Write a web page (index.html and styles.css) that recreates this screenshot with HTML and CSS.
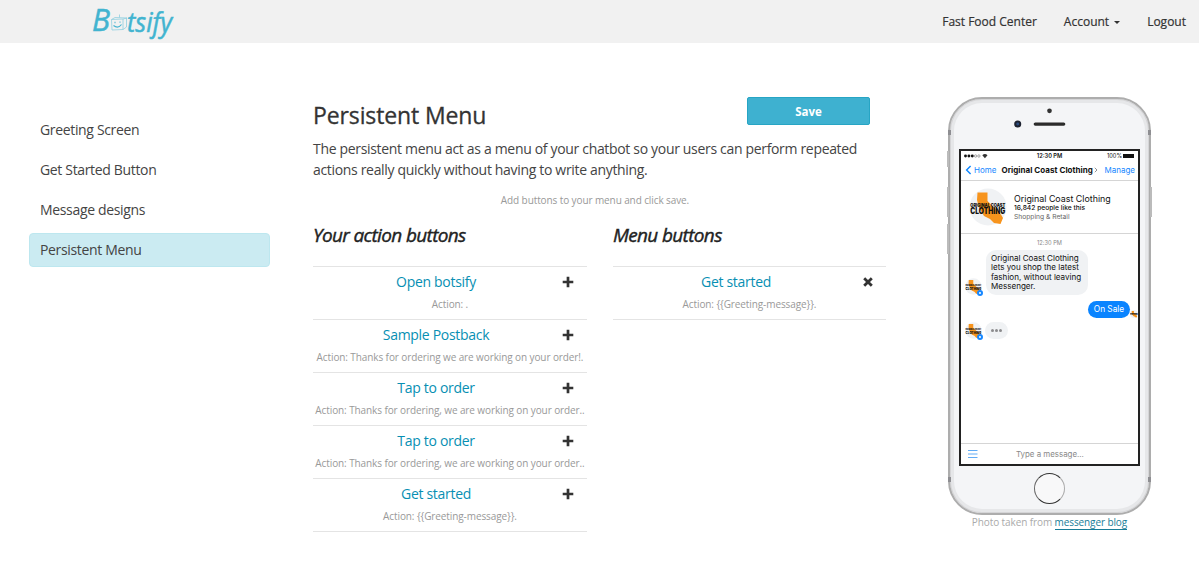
FILE: index.html
```html
<!DOCTYPE html>
<html lang="en">
<head>
<meta charset="utf-8">
<title>Botsify - Persistent Menu</title>
<link rel="stylesheet" href="styles.css">
</head>
<body>
<svg class="defs" width="0" height="0">
  <symbol id="plus" viewBox="0 0 12 12"><path d="M6 .7V11.3M.7 6H11.3" stroke="#333" stroke-width="2.7" fill="none"/></symbol>
  <symbol id="cross" viewBox="0 0 12 12"><path d="M2.2 2.2L9.8 9.8M9.8 2.2L2.2 9.8" stroke="#333" stroke-width="2.8" fill="none"/></symbol>
  <symbol id="brand" viewBox="0 0 38 38">
    <circle cx="19" cy="19" r="18.5" fill="#f0f2f4"/>
    <path d="M8.500 4.500H18.500V13L32 26.500 34 30 31.500 36 25 35 21 31 15 28 10 20 8 12Z" fill="#f7941d"/>
    <text x="1.300" y="18.700" font-size="5" textLength="35" lengthAdjust="spacingAndGlyphs">ORIGINAL COAST</text>
    <text x="1.300" y="25.800" font-size="8.400" textLength="35" lengthAdjust="spacingAndGlyphs">CLOTHING</text>
  </symbol>
</svg>
<header class="topbar">
  <svg class="logo" width="84" height="40" viewBox="0 0 84 40" aria-label="Botsify">
    <g class="logo-type">
      <text x="0" y="29" font-size="31" textLength="18" lengthAdjust="spacingAndGlyphs">B</text>
      <text x="35" y="29.500" font-size="28" textLength="45" lengthAdjust="spacingAndGlyphs">tsify</text>
    </g>
    <g fill="none" stroke="#8fcfe0" stroke-width=".8">
      <path d="M19.500 17.500L31 17V27.500L20 28ZM19.500 17.500L23 15.500 35 16 31 17M31 27.500L34.500 25V16M27.500 15.500V12.500"/>
      <path d="M21.500 23.500Q26 27 29.500 22.500" stroke="#45b4d1" stroke-width="1.200"/>
      <path d="M22.500 20.500h1M27.500 20.200h1" stroke="#45b4d1" stroke-width="1.300"/>
    </g>
  </svg>
  <nav class="topnav">
    <a>Fast Food Center</a>
    <a>Account<i class="caret"></i></a>
    <a>Logout</a>
  </nav>
</header>
<div class="page">
  <ul class="side">
    <li>Greeting Screen</li>
    <li>Get Started Button</li>
    <li>Message designs</li>
    <li class="active">Persistent Menu</li>
  </ul>
  <main class="main">
    <div class="heading"><h1>Persistent Menu</h1><button class="save">Save</button></div>
    <p class="lead">The persistent menu act as a menu of your chatbot so your users can perform repeated<br>actions really quickly without having to write anything.</p>
    <p class="hint">Add buttons to your menu and click save.</p>
    <div class="columns">
      <section>
        <h2>Your action buttons</h2>
        <ul class="rows">
          <li><b>Open botsify</b><svg><use href="#plus"/></svg><small>Action: .</small></li>
          <li><b>Sample Postback</b><svg><use href="#plus"/></svg><small>Action: Thanks for ordering we are working on your order!.</small></li>
          <li><b>Tap to order</b><svg><use href="#plus"/></svg><small>Action: Thanks for ordering, we are working on your order..</small></li>
          <li><b>Tap to order</b><svg><use href="#plus"/></svg><small>Action: Thanks for ordering, we are working on your order..</small></li>
          <li><b>Get started</b><svg><use href="#plus"/></svg><small>Action: {{Greeting-message}}.</small></li>
        </ul>
      </section>
      <section>
        <h2>Menu buttons</h2>
        <ul class="rows">
          <li><b>Get started</b><svg><use href="#cross"/></svg><small>Action: {{Greeting-message}}.</small></li>
        </ul>
      </section>
    </div>
  </main>
  <aside class="preview">
    <div class="phone">
      <i class="key k1"></i><i class="key k2"></i><i class="key k3"></i><i class="key k4"></i>
      <i class="band b1"></i><i class="band b2"></i>
      <svg class="sensors" width="181" height="46" viewBox="0 0 181 46">
        <circle cx="90.500" cy="7" r="2.400" fill="#333"/>
        <circle cx="58" cy="20.500" r="3.600" fill="#1d2230"/><circle cx="58" cy="20.500" r="1.500" fill="#2c4d80"/>
        <path d="M76 20.500H105" stroke="#2b2b2b" stroke-width="3.400" stroke-linecap="round"/>
      </svg>
      <div class="screen">
        <div class="status">
          <svg width="28" height="8" viewBox="0 0 28 8"><g fill="#111"><circle cx="4.500" cy="4" r="1.450"/><circle cx="7.900" cy="4" r="1.450"/><circle cx="11.300" cy="4" r="1.450"/></g><g fill="none" stroke="#555" stroke-width=".5"><circle cx="14.600" cy="4" r="1.200"/><circle cx="17.900" cy="4" r="1.200"/></g><path d="M21.300 3.300Q23.900 .9 26.500 3.300L23.900 6.300Z" fill="#333"/></svg>
          <span class="time">12:30 PM</span>
          <span class="batt">100%<i></i></span>
        </div>
        <div class="bar">
          <svg width="7" height="10" viewBox="0 0 7 10"><path d="M5.600 1L1.600 5 5.600 9" fill="none" stroke="#0a84ff" stroke-width="1.400"/></svg>
          <a class="home">Home</a>
          <strong>Original Coast Clothing</strong>
          <svg class="chev" width="4" height="6" viewBox="0 0 4 6"><path d="M.8 .8L3 3 .8 5.200" fill="none" stroke="#777" stroke-width=".8"/></svg>
          <a class="manage">Manage</a>
        </div>
        <div class="profile">
          <svg class="brand" width="38" height="38"><use href="#brand"/></svg>
          <div><p class="p1">Original Coast Clothing</p><p class="p2">16,842 people like this</p><p class="p3">Shopping &amp; Retail</p></div>
        </div>
        <div class="chat">
          <p class="stamp">12:30 PM</p>
          <div class="msg">
            <span class="avatar"><svg class="brand" width="17" height="17"><use href="#brand"/></svg><i></i></span>
            <p class="bubble">Original Coast Clothing<br>lets you shop the latest<br>fashion, without leaving<br>Messenger.</p>
          </div>
          <div class="reply"><p>On Sale</p><svg class="brand" width="8" height="8"><use href="#brand"/></svg></div>
          <div class="msg typing">
            <span class="avatar"><svg class="brand" width="17" height="17"><use href="#brand"/></svg><i></i></span>
            <p class="dots"><i></i><i></i><i></i></p>
          </div>
        </div>
        <div class="compose">
          <svg width="10" height="8" viewBox="0 0 10 8"><path d="M0 .5H9.500M0 4H9.500M0 7.500H9.500" stroke="#62acf5" stroke-width="1"/></svg>
          <span>Type a message...</span>
        </div>
      </div>
      <div class="button"></div>
    </div>
    <p class="credit">Photo taken from <a>messenger blog</a></p>
  </aside>
</div>
</body>
</html>
```
FILE: styles.css
```css
* { box-sizing: border-box; }
body { margin: 0; background: #fff; color: #444; font: 14px "Open Sans", sans-serif; width: 1200px; height: 588px; overflow: hidden; }
h1, h2, p, ul { margin: 0; padding: 0; }
ul { list-style: none; }
svg { display: block; flex: none; }
.defs { display: none; }
.topbar { height: 43px; width: 1199px; background: #f1f1f1; display: flex; justify-content: space-between; padding: 2px 13px 0 92px; }
.logo { overflow: visible; }
.logo-type { fill: #42b4d0; stroke: #42b4d0; stroke-width: .5px; font-family: "Open Sans", sans-serif; font-style: italic; }
.topnav { display: flex; gap: 27px; font-size: 12px; line-height: 39px; color: #333; -webkit-text-stroke: .2px #333; }
.topnav a { white-space: nowrap; }
.caret { display: inline-block; border: 3.5px solid transparent; border-top-color: #333; border-bottom: 0; margin-left: 5px; vertical-align: 2px; }
.page { display: flex; align-items: flex-start; }
.side { width: 241px; margin: 70px 0 0 29px; display: grid; gap: 6px; }
.side li { height: 34px; line-height: 34px; padding-left: 11px; border-radius: 4px; font-size: 14px; letter-spacing: -.34px; }
.side .active { background: #cbebf2; border: 1px solid #bde7ef; line-height: 32px; padding-left: 10px; }
.main { width: 573px; margin: 54px 0 0 43px; }
.heading { display: flex; justify-content: space-between; height: 40px; padding-right: 16px; }
h1 { font-size: 23px; line-height: 37px; font-weight: 400; color: #333; letter-spacing: -.12px; -webkit-text-stroke: .3px #333; }
.save { width: 123px; height: 28px; border: 1px solid #27a5c4; border-radius: 2px; background: #3eb1d0; color: #fff; font: 700 11.500px "Open Sans", sans-serif; padding: 0; }
.lead { font-size: 14px; letter-spacing: -.325px; line-height: 21px; margin-top: 1px; white-space: nowrap; }
.hint { color: #999; font-size: 10px; letter-spacing: -.1px; line-height: 16px; text-align: center; margin: 12px 9px 0 0; }
.columns { display: grid; grid-template-columns: 274px 273px; column-gap: 26px; margin-top: 14px; }
h2 { font-size: 19px; line-height: 26px; font-weight: 400; font-style: italic; letter-spacing: -.65px; color: #222; -webkit-text-stroke: .4px #222; white-space: nowrap; }
.rows { margin-top: 18px; border-bottom: 1px solid #e4e4e4; }
.rows li { height: 53px; border-top: 1px solid #e4e4e4; display: grid; grid-template-columns: 246px 1fr; grid-template-rows: 30px 14px; text-align: center; }
.rows b { color: #078fb3; font-weight: 400; font-size: 14px; letter-spacing: -.3px; line-height: 30px; }
.rows svg { width: 12px; height: 12px; align-self: center; margin-left: 3px; }
.rows small { grid-column: 1 / 3; font-size: 10px; letter-spacing: -.1px; line-height: 14px; color: #999; white-space: nowrap; }
.preview { margin: 54px 0 0 62px; width: 203px; }
.phone { position: relative; height: 418px; border: 2px solid #adadad; border-radius: 34px; background: #f4f5f7; box-shadow: inset 0 0 0 1px #d5d5d7, inset 0 0 0 4px #e6e7e9; padding: 5px 9px 0; display: flex; flex-direction: column; }
.key { position: absolute; width: 2px; background: #bbb; left: -3px; }
.k1 { top: 52px; height: 16px; }
.k2 { top: 88px; height: 30px; }
.k3 { top: 125px; height: 30px; }
.k4 { top: 88px; height: 30px; left: 200px; }
.band { position: absolute; left: -2px; right: -2px; height: 5px; border: solid #8e8e92; border-width: 0 3px; }
.b1 { top: 31px; }
.b2 { bottom: 31px; }
.sensors { height: 45px; }
.screen { height: 317px; width: 181px; border: 2px solid #222; background: #fff; color: #111; font-family: Inter, sans-serif; display: flex; flex-direction: column; flex: none; }
.status { height: 9px; display: grid; grid-template-columns: 1fr 1fr 1fr; align-items: center; font-size: 5.700px; line-height: 8px; font-weight: 600; }
.time { text-align: center; }
.batt { display: flex; justify-content: flex-end; align-items: center; gap: 1px; padding-right: 4px; font-weight: 400; }
.batt i { width: 11px; height: 4px; background: #111; }
.bar { height: 21px; border-bottom: 1px solid #d5d5d5; display: flex; align-items: center; padding: 0 3px 0 4px; font-size: 8px; white-space: nowrap; }
.bar a { color: #1687ff; }
.bar strong { letter-spacing: .04px; }
.home { margin: 0 5px 0 2px; }
.chev { margin-left: 1px; }
.bar .manage { margin-left: auto; }
.profile { height: 53px; border-bottom: 1px solid #d5d5d5; display: flex; align-items: center; gap: 7px; padding-left: 8px; white-space: nowrap; }
.brand { font-family: Inter, sans-serif; font-weight: 900; fill: #111; }
.p1 { font-size: 8.900px; line-height: 11px; }
.p2 { font-size: 6.700px; line-height: 9px; font-weight: 500; }
.p3 { font-size: 6.700px; line-height: 8px; color: #666; }
.chat { flex: 1; padding-top: 5px; }
.stamp { text-align: center; font-size: 5.700px; line-height: 8px; color: #888; }
.msg { display: flex; align-items: flex-end; gap: 4px; padding-left: 4px; margin-top: 3px; }
.avatar { position: relative; }
.avatar i { position: absolute; right: -1px; bottom: -1px; width: 6px; height: 6px; border-radius: 50%; background: #fff; border: 2px solid #1687ff; }
.bubble { width: 102px; height: 45px; background: #f0f2f4; border-radius: 10px; padding: 4px 5px; font-size: 8.050px; line-height: 9.400px; white-space: nowrap; }
.reply { display: flex; justify-content: flex-end; align-items: flex-end; margin-top: 6px; }
.reply p { width: 42px; height: 17px; border-radius: 9px; background: #0a84ff; color: #fff; font-size: 8.300px; line-height: 17px; text-align: center; }
.typing { margin-top: 4px; gap: 3px; }
.dots { width: 23px; height: 17px; background: #f0f2f4; border-radius: 9px; display: flex; align-items: center; justify-content: center; gap: 1px; }
.dots i { width: 3px; height: 3px; border-radius: 50%; background: #8b8b8d; }
.compose { height: 21px; border-top: 1px solid #d5d5d5; display: flex; align-items: center; padding-left: 7px; gap: 38px; color: #888; font-size: 7.900px; }
.button { width: 31px; height: 31px; margin: 7px auto 0; border-radius: 50%; border: 1.500px solid; border-color: #333 #aaa #333 #666; background: #f8f8f9; flex: none; }
.credit { text-align: center; color: #aaa; font-size: 10px; letter-spacing: -.1px; line-height: 15px; white-space: nowrap; }
.credit a { color: #187d98; border-bottom: 1px solid #187d98; }
```
